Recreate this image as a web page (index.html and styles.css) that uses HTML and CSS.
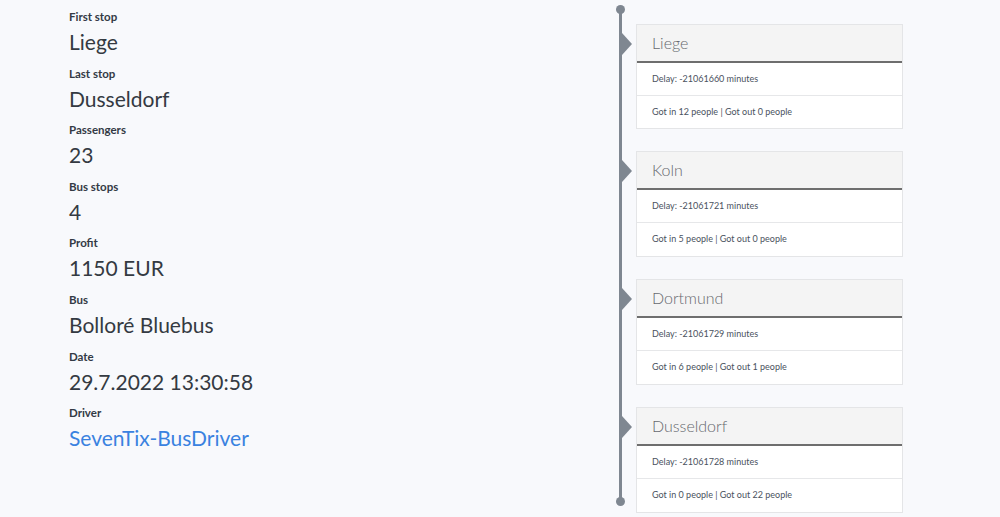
FILE: index.html
```html
<!DOCTYPE html>
<html lang="en">
<head>
<meta charset="utf-8">
<title>Trip</title>
<link rel="stylesheet" href="styles.css">
</head>
<body>
<div class="page">
  <div class="details">
    <div class="item"><div class="label">First stop</div><div class="value">Liege</div></div>
    <div class="item"><div class="label">Last stop</div><div class="value">Dusseldorf</div></div>
    <div class="item"><div class="label">Passengers</div><div class="value">23</div></div>
    <div class="item"><div class="label">Bus stops</div><div class="value">4</div></div>
    <div class="item"><div class="label">Profit</div><div class="value">1150 EUR</div></div>
    <div class="item"><div class="label">Bus</div><div class="value">Bolloré Bluebus</div></div>
    <div class="item"><div class="label">Date</div><div class="value">29.7.2022 13:30:58</div></div>
    <div class="item"><div class="label">Driver</div><div class="value"><a class="link" href="#">SevenTix-BusDriver</a></div></div>
  </div>
  <div class="timeline">
    <div class="card">
      <div class="card-head">Liege</div>
      <div class="card-row">Delay: -21061660 minutes</div>
      <div class="card-row">Got in 12 people | Got out 0 people</div>
    </div>
    <div class="card">
      <div class="card-head">Koln</div>
      <div class="card-row">Delay: -21061721 minutes</div>
      <div class="card-row">Got in 5 people | Got out 0 people</div>
    </div>
    <div class="card">
      <div class="card-head">Dortmund</div>
      <div class="card-row">Delay: -21061729 minutes</div>
      <div class="card-row">Got in 6 people | Got out 1 people</div>
    </div>
    <div class="card">
      <div class="card-head">Dusseldorf</div>
      <div class="card-row">Delay: -21061728 minutes</div>
      <div class="card-row">Got in 0 people | Got out 22 people</div>
    </div>
  </div>
</div>
</body>
</html>
```
FILE: styles.css
```css
html, body {
  margin: 0;
  padding: 0;
  background: #f8f9fc;
}
body {
  font-family: "Lato", "Liberation Sans", sans-serif;
  color: #343a42;
  width: 1000px;
  height: 517px;
  overflow: hidden;
}
.page {
  display: flex;
  align-items: flex-start;
}
.details {
  width: 550px;
  padding: 9px 0 0 69px;
  box-sizing: content-box;
}
.item {
  height: 56.6px;
}
.label {
  font-size: 11.5px;
  font-weight: 700;
  line-height: 16px;
  color: #333a45;
}
.value {
  font-size: 21px;
  line-height: 34px;
  color: #343a42;
}
.link {
  color: #3a82e0;
  text-decoration: none;
}
.timeline {
  position: relative;
  padding: 23.6px 0 0 17px;
  width: 267px;
  height: 493px;
}
.timeline::before {
  content: "";
  position: absolute;
  left: 0;
  top: 10px;
  height: 492px;
  width: 3px;
  background: #7f8791;
}
.timeline::after {
  content: "";
  position: absolute;
  left: -3px;
  top: 5px;
  width: 9px;
  height: 9px;
  border-radius: 50%;
  background: #7f8791;
  box-shadow: 0 492px 0 0 #7f8791;
}
.card {
  position: relative;
  width: 267px;
  height: 105.5px;
  box-sizing: border-box;
  border: 1px solid #e4e5e7;
  background: #fff;
  margin-bottom: 22.4px;
}
.card::before {
  content: "";
  position: absolute;
  left: -15px;
  top: 8px;
  width: 0;
  height: 0;
  border-top: 11px solid transparent;
  border-bottom: 11px solid transparent;
  border-left: 10px solid #7f8791;
}
.card-head {
  height: 36px;
  line-height: 36px;
  padding-left: 15px;
  background: #f4f4f4;
  border-bottom: 2px solid #6e6e6e;
  font-size: 16px;
  font-weight: 300;
  color: #66696e;
}
.card-row {
  height: 32px;
  line-height: 32px;
  padding-left: 15px;
  font-size: 9px;
  color: #4a5260;
}
.card-row + .card-row {
  border-top: 1px solid #e6e7e9;
}
```
